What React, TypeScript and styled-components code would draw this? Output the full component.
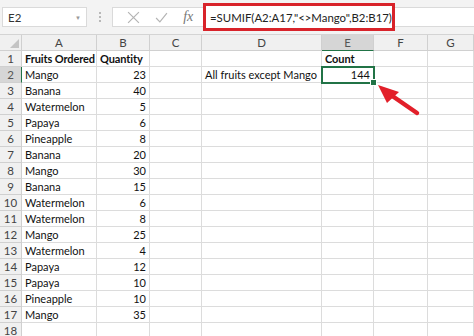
import React from "react";
import styled, { createGlobalStyle } from "styled-components";

const GlobalStyle = createGlobalStyle`
  html, body {
    margin: 0;
    padding: 0;
    background: #ffffff;
  }
  body {
    width: 474px;
    height: 336px;
    overflow: hidden;
    font-family: Lato, "Open Sans", sans-serif;
  }
`;

const COLS = ["A", "B", "C", "D", "E", "F", "G"];
const COL_WIDTHS = "22px 75px 53px 52px 120px 52px 54px 46px";

const ROWS: [string, string][] = [
  ["Fruits Ordered", "Quantity"],
  ["Mango", "23"],
  ["Banana", "40"],
  ["Watermelon", "5"],
  ["Papaya", "6"],
  ["Pineapple", "8"],
  ["Banana", "20"],
  ["Mango", "30"],
  ["Banana", "15"],
  ["Watermelon", "6"],
  ["Watermelon", "8"],
  ["Mango", "25"],
  ["Watermelon", "4"],
  ["Papaya", "12"],
  ["Papaya", "10"],
  ["Pineapple", "10"],
  ["Mango", "35"],
  ["", ""],
];

const Page = styled.div`
  position: relative;
  width: 474px;
  height: 336px;
  overflow: hidden;
  background: #ffffff;
`;

const FormulaBar = styled.div`
  height: 34px;
  display: flex;
  align-items: center;
  background: #f3f3f3;
  padding-left: 2px;
  box-sizing: border-box;
`;

const NameBox = styled.div`
  flex: 0 0 85px;
  height: 20px;
  background: #ffffff;
  border: 1px solid #dadada;
  box-sizing: border-box;
  display: flex;
  align-items: center;
  justify-content: space-between;
  padding: 0 5px;
  font-size: 11.5px;
  color: #333;
`;

const Caret = styled.span`
  font-size: 6px;
  color: #999;
`;

const Dots = styled.div`
  flex: 0 0 25px;
  display: flex;
  flex-direction: column;
  align-items: center;
  gap: 2px;
  & > span {
    width: 2px;
    height: 2px;
    background: #b8b8b8;
  }
`;

const Buttons = styled.div`
  flex: 0 0 91px;
  height: 20px;
  background: #ffffff;
  border: 1px solid #dadada;
  border-right: none;
  box-sizing: border-box;
  display: flex;
  align-items: center;
  justify-content: space-around;
  padding: 0 2px 0 6px;
`;

const Fx = styled.span`
  font-family: "Liberation Serif", serif;
  font-style: italic;
  font-size: 14px;
  color: #777;
`;

const FormulaInput = styled.div`
  flex: 0 0 192px;
  height: 28px;
  display: flex;
  align-items: center;
  background: #ffffff;
  border: 3px solid #d8232a;
  box-sizing: border-box;
  padding-left: 4px;
  font-size: 11.4px;
  color: #222;
  white-space: nowrap;
  overflow: hidden;
`;

const FormulaRest = styled.div`
  flex: 1;
  height: 20px;
  background: #ffffff;
  border-top: 1px solid #dadada;
  border-bottom: 1px solid #dadada;
  box-sizing: border-box;
`;

const Sheet = styled.div`
  display: grid;
  grid-template-columns: ${COL_WIDTHS};
  grid-auto-rows: 16px;
  border-top: 1px solid #d4d4d4;
`;

const HeaderCell = styled.div<{ $active?: boolean; $side?: boolean }>`
  background: ${(p) => (p.$active ? "#d6d6d6" : "#f0f0f0")};
  color: ${(p) => (p.$active ? "#555" : "#444")};
  border-right: 1px solid ${(p) => (p.$active && p.$side ? "#217346" : "#d0d0d0")};
  border-bottom: 1px solid ${(p) => (p.$active && !p.$side ? "#217346" : "#d0d0d0")};
  box-sizing: border-box;
  display: flex;
  align-items: center;
  justify-content: center;
  font-size: 11.5px;
  line-height: 1;
  position: relative;
`;

const Corner = styled(HeaderCell)`
  &::after {
    content: "";
    position: absolute;
    right: 2px;
    bottom: 2px;
    border-left: 9px solid transparent;
    border-bottom: 9px solid #c4c4c4;
  }
`;

const Cell = styled.div<{ $right?: boolean; $bold?: boolean; $selected?: boolean }>`
  border-right: 1px solid #dcdcdc;
  border-bottom: 1px solid #dcdcdc;
  box-sizing: border-box;
  display: flex;
  align-items: center;
  justify-content: ${(p) => (p.$right ? "flex-end" : "flex-start")};
  padding: 0 3px;
  font-size: 11px;
  font-weight: ${(p) => (p.$bold ? 700 : 400)};
  letter-spacing: ${(p) => (p.$bold ? "-0.1px" : "0")};
  color: #111;
  white-space: nowrap;
  overflow: visible;
  position: relative;
  ${(p) =>
    p.$selected &&
    `
    outline: 2px solid #217346;
    outline-offset: -1px;
    z-index: 1;
    &::after {
      content: "";
      position: absolute;
      right: -4px;
      bottom: -4px;
      width: 5px;
      height: 5px;
      background: #217346;
      border: 1px solid #fff;
    }
  `}
`;

const Arrow = styled.svg`
  position: absolute;
  left: 376px;
  top: 82px;
`;

export default function App() {
  const extra = (r: number) => {
    if (r === 0) return ["", "", "Count", "", ""];
    if (r === 1) return ["", "All fruits except Mango", "144", "", ""];
    return ["", "", "", "", ""];
  };

  return (
    <Page>
      <GlobalStyle />
      <FormulaBar>
        <NameBox>
          E2 <Caret>▼</Caret>
        </NameBox>
        <Dots>
          <span />
          <span />
          <span />
        </Dots>
        <Buttons>
          <svg width="13" height="13" viewBox="0 0 12 12">
            <path d="M1 1 L11 11 M11 1 L1 11" stroke="#b4b4b4" strokeWidth="1.1" />
          </svg>
          <svg width="13" height="13" viewBox="0 0 12 12">
            <path d="M1 6.5 L4.5 10 L11 2" stroke="#b4b4b4" strokeWidth="1.1" fill="none" />
          </svg>
          <Fx>fx</Fx>
        </Buttons>
        <FormulaInput>=SUMIF(A2:A17,"&lt;&gt;Mango",B2:B17)</FormulaInput>
        <FormulaRest />
      </FormulaBar>
      <Sheet>
        <Corner />
        {COLS.map((c) => (
          <HeaderCell key={c} $active={c === "E"}>
            {c}
          </HeaderCell>
        ))}
        {ROWS.map((row, i) => {
          const ex = extra(i);
          return (
            <React.Fragment key={i}>
              <HeaderCell $active={i === 1} $side>
                {i + 1}
              </HeaderCell>
              <Cell $bold={i === 0}>{row[0]}</Cell>
              <Cell $bold={i === 0} $right={i > 0}>
                {row[1]}
              </Cell>
              <Cell>{ex[0]}</Cell>
              <Cell>{ex[1]}</Cell>
              <Cell $bold={i === 0} $right={i === 1} $selected={i === 1}>
                {ex[2]}
              </Cell>
              <Cell>{ex[3]}</Cell>
              <Cell>{ex[4]}</Cell>
            </React.Fragment>
          );
        })}
      </Sheet>
      <Arrow width="46" height="36" viewBox="0 0 46 36">
        <path d="M41 31 L12 11" stroke="#e2202a" strokeWidth="4.5" strokeLinecap="round" />
        <path d="M2 3 L23 10 L11 21 Z" fill="#e2202a" />
      </Arrow>
    </Page>
  );
}
